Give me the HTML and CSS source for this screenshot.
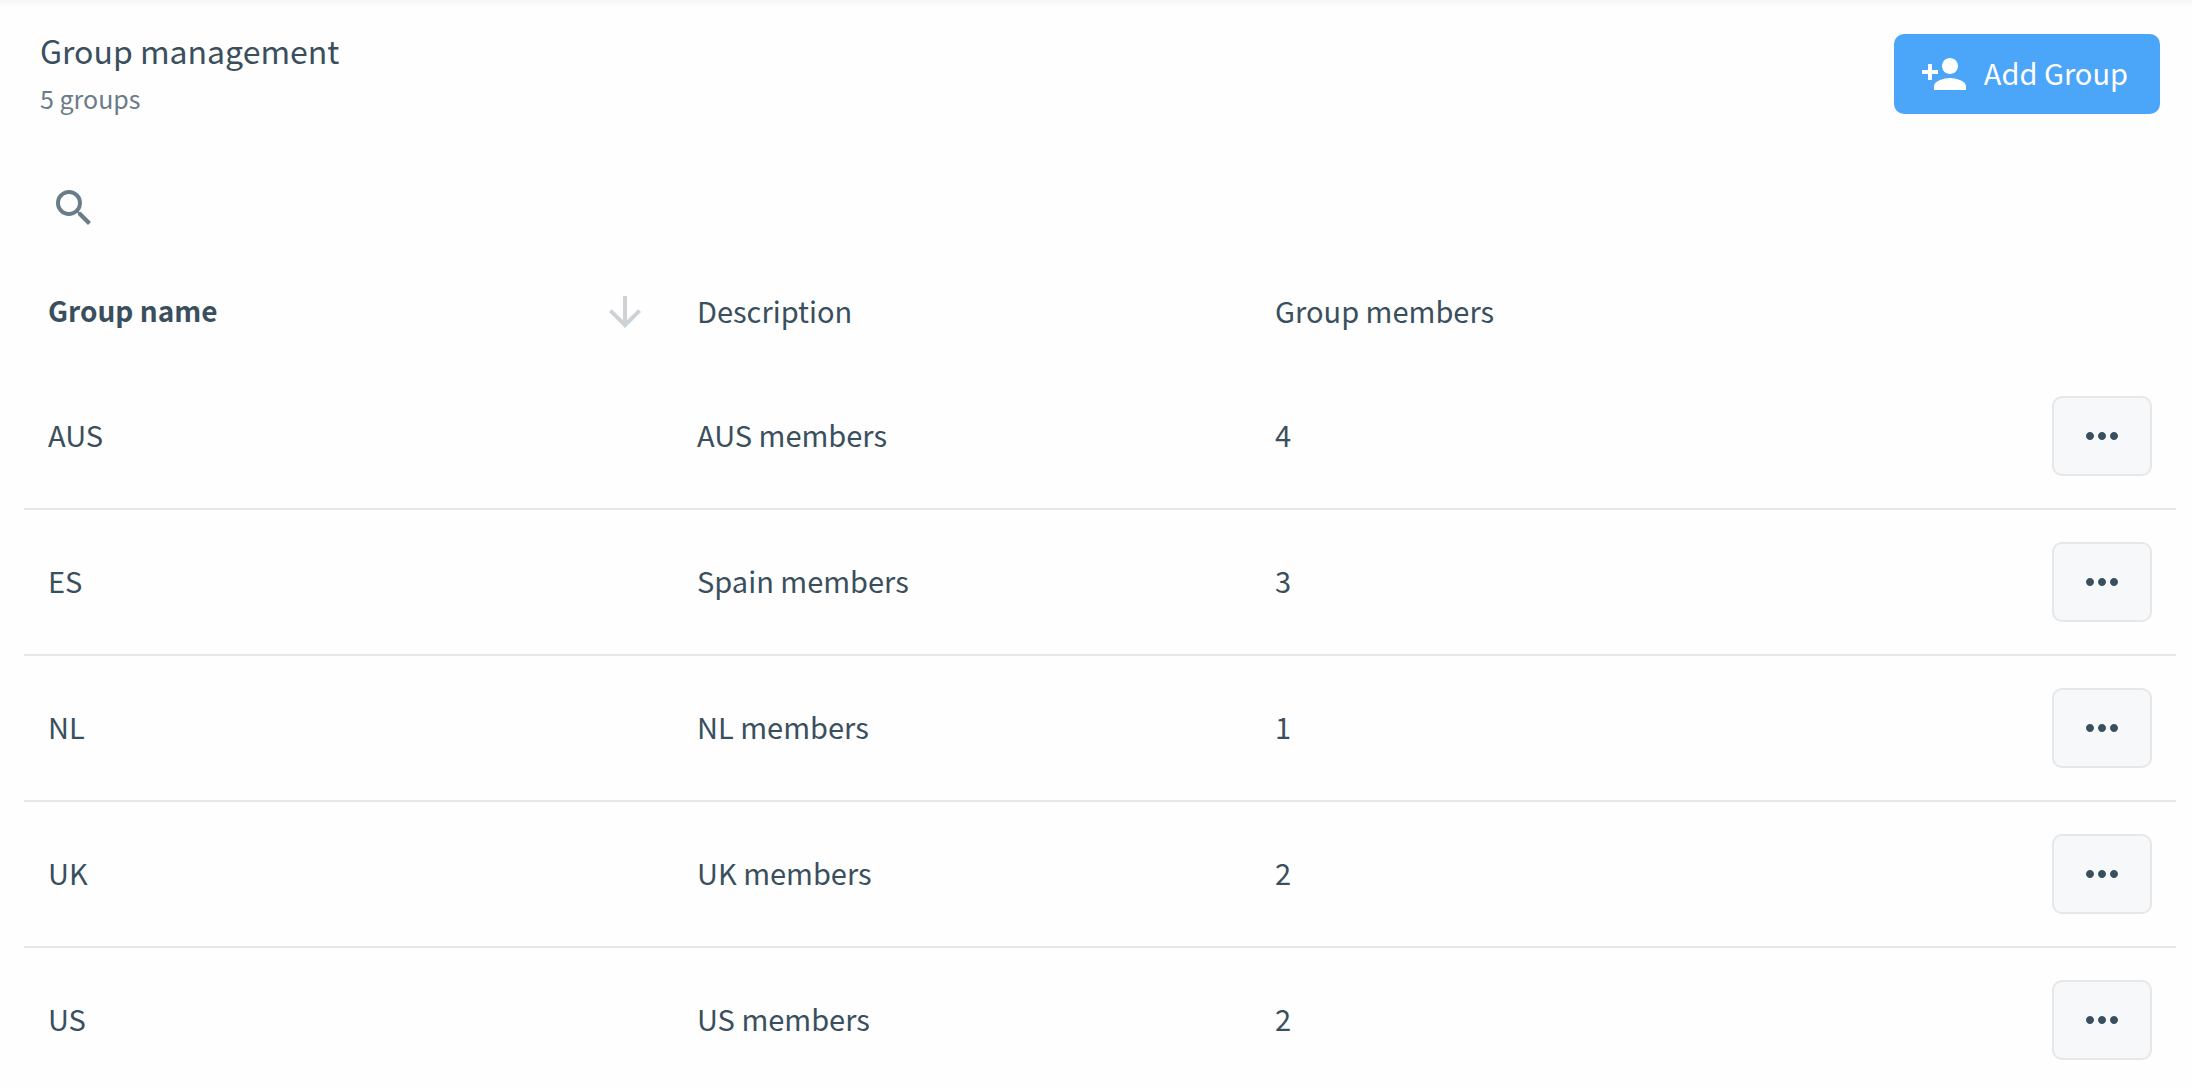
FILE: index.html
```html
<!DOCTYPE html>
<html lang="en">
<head>
<meta charset="utf-8">
<title>Group management</title>
<meta name="viewport" content="width=device-width, initial-scale=1">
<link rel="stylesheet" href="styles.css">
</head>
<body>
<svg class="sprite" aria-hidden="true">
  <symbol id="more" viewBox="0 0 24 24"><path d="M6 10c-1.100 0-2 .9-2 2s.9 2 2 2 2-.9 2-2-.9-2-2-2zm12 0c-1.100 0-2 .9-2 2s.9 2 2 2 2-.9 2-2-.9-2-2-2zm-6 0c-1.100 0-2 .9-2 2s.9 2 2 2 2-.9 2-2-.9-2-2-2z"/></symbol>
</svg>
<main class="page">
  <header class="page-header">
    <div>
      <h1 class="title">Group management</h1>
      <p class="subtitle">5 groups</p>
    </div>
    <button class="add-button" type="button">
      <svg class="icon" viewBox="0 0 24 24" aria-hidden="true"><path d="M15 12c2.210 0 4-1.790 4-4s-1.790-4-4-4-4 1.790-4 4 1.790 4 4 4zm-9-2V7H4v3H1v2h3v3h2v-3h3v-2H6zm9 4c-2.670 0-8 1.340-8 4v2h16v-2c0-2.660-5.330-4-8-4z"/></svg>
      <span class="label">Add Group</span>
    </button>
  </header>
  <div class="toolbar">
    <button class="search-button" type="button" aria-label="Search">
      <svg class="icon" viewBox="0 0 24 24" aria-hidden="true"><path d="M15.500 14h-.79l-.28-.27A6.471 6.471 0 0 0 16 9.500 6.500 6.500 0 1 0 9.500 16c1.610 0 3.090-.59 4.230-1.570l.27.28v.79l5 4.990L20.490 19l-4.990-5zm-6 0C7.010 14 5 11.990 5 9.500S7.010 5 9.500 5 14 7.010 14 9.500 11.990 14 9.500 14z"/></svg>
    </button>
  </div>
  <table class="groups">
    <colgroup><col class="col-name"><col class="col-description"><col><col class="col-actions"></colgroup>
    <thead>
      <tr>
        <th class="sorted" scope="col" aria-sort="descending">
          <div class="sort-label">
            <span class="label">Group name</span>
            <svg class="icon sort-icon" viewBox="0 0 24 24" aria-hidden="true"><path d="M20 12l-1.410-1.410L13 16.170V4h-2v12.170l-5.580-5.590L4 12l8 8 8-8z"/></svg>
          </div>
        </th>
        <th scope="col">Description</th>
        <th scope="col">Group members</th>
        <td></td>
      </tr>
    </thead>
    <tbody>
      <tr><td>AUS</td><td>AUS members</td><td>4</td><td class="actions"><button class="more-button" type="button" aria-label="AUS actions"><svg class="icon"><use href="#more"/></svg></button></td></tr>
      <tr><td>ES</td><td>Spain members</td><td>3</td><td class="actions"><button class="more-button" type="button" aria-label="ES actions"><svg class="icon"><use href="#more"/></svg></button></td></tr>
      <tr><td>NL</td><td>NL members</td><td>1</td><td class="actions"><button class="more-button" type="button" aria-label="NL actions"><svg class="icon"><use href="#more"/></svg></button></td></tr>
      <tr><td>UK</td><td>UK members</td><td>2</td><td class="actions"><button class="more-button" type="button" aria-label="UK actions"><svg class="icon"><use href="#more"/></svg></button></td></tr>
      <tr><td>US</td><td>US members</td><td>2</td><td class="actions"><button class="more-button" type="button" aria-label="US actions"><svg class="icon"><use href="#more"/></svg></button></td></tr>
    </tbody>
  </table>
</main>
</body>
</html>
```

FILE: styles.css
```css
*, *::before, *::after { box-sizing: border-box; }

body {
  margin: 0;
  background: #fefefe linear-gradient(#f7f7f7, #fefefe) no-repeat 0 0 / 100% 8px;
  color: #3a4f5d;
  font: 400 29px/40px "Noto Sans CJK SC", "Noto Sans", sans-serif;
}

button { font: inherit; cursor: pointer; }

.sprite { display: none; }

.icon {
  display: block;
  flex: none;
  width: 48px;
  height: 48px;
  fill: currentColor;
}

/* Lifts text so its x-height centres on the icon beside it */
.label { padding-bottom: 4px; }

.page { padding: 30px 16px 0 24px; }

.page-header {
  display: flex;
  justify-content: space-between;
  align-items: flex-start;
  padding: 0 16px;
}

.title {
  margin: 0;
  font-size: 32px;
  line-height: 40px;
  font-weight: 400;
}

.subtitle {
  margin: 8px 0 0;
  color: #6b7c89;
  font-size: 25px;
  line-height: 40px;
}

.add-button {
  display: flex;
  align-items: center;
  gap: 16px;
  height: 80px;
  margin-top: 4px;
  padding: 0 32px 0 26px;
  border: 0;
  border-radius: 10px;
  background: #4ba5f8;
  color: #fff;
}

.toolbar { padding: 58px 18px 20px; }

.search-button {
  display: block;
  padding: 8px;
  border: 0;
  background: none;
  color: #6b7c89;
}

.groups {
  width: 100%;
  table-layout: fixed;
  border-collapse: separate;
  border-spacing: 0;
}

.col-name { width: 30.16%; }
.col-description { width: 26.86%; }
.col-actions { width: 148px; }

.groups th,
.groups td {
  padding: 28px 24px 32px;
  text-align: left;
  vertical-align: middle;
  font-weight: 400;
}

.groups th.sorted {
  padding: 28px 24px;
  font-size: 28px;
  font-weight: 700;
}

.groups td.actions { padding: 32px 24px; }

.groups tbody tr:not(:last-child) td { border-bottom: 2px solid #e6e7e8; }

.sort-label {
  display: flex;
  align-items: center;
  justify-content: space-between;
}

.sort-icon { color: #ccd2d6; }

.more-button {
  display: grid;
  place-items: center;
  width: 100px;
  height: 80px;
  padding: 0;
  border: 2px solid #e6e7e8;
  border-radius: 10px;
  background: #f6f8fa;
  color: #3a4f5d;
}
```
